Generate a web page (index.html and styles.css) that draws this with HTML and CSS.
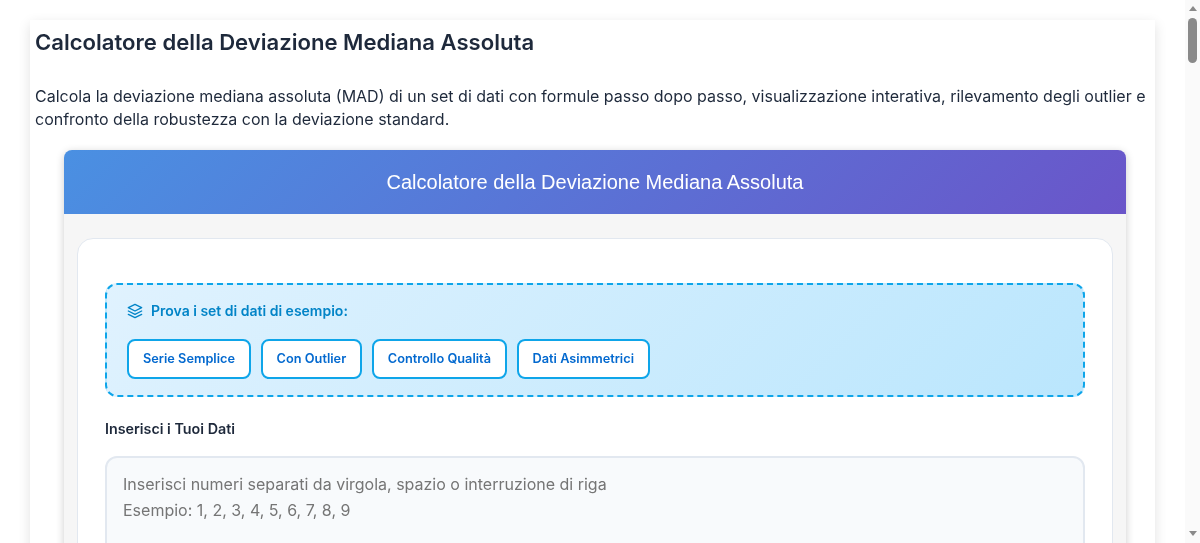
FILE: index.html
```html
<!DOCTYPE html>
<html lang="it">
<head>
<meta charset="utf-8">
<title>Calcolatore della Deviazione Mediana Assoluta</title>
<link rel="stylesheet" href="styles.css">
</head>
<body>
<main class="page">
  <h1 class="page-title">Calcolatore della Deviazione Mediana Assoluta</h1>
  <p class="page-intro">Calcola la deviazione mediana assoluta (MAD) di un set di dati con formule passo dopo passo, visualizzazione interativa, rilevamento degli outlier e confronto della robustezza con la deviazione standard.</p>
  <section class="widget">
    <header class="widget-head">Calcolatore della Deviazione Mediana Assoluta</header>
    <div class="widget-body">
      <div class="panel">
        <div class="samples">
          <div class="samples-title">
            <svg class="samples-icon" viewBox="0 0 24 24" fill="none" stroke="currentColor" stroke-width="2" stroke-linecap="round" stroke-linejoin="round"><path d="M12 2 2 7l10 5 10-5-10-5Z"/><path d="m2 12 10 5 10-5"/><path d="m2 17 10 5 10-5"/></svg>
            <span>Prova i set di dati di esempio:</span>
          </div>
          <div class="samples-buttons">
            <button class="sample-btn">Serie Semplice</button>
            <button class="sample-btn">Con Outlier</button>
            <button class="sample-btn">Controllo Qualità</button>
            <button class="sample-btn">Dati Asimmetrici</button>
          </div>
        </div>
        <label class="field-label" for="data">Inserisci i Tuoi Dati</label>
        <textarea class="field-input" id="data" placeholder="Inserisci numeri separati da virgola, spazio o interruzione di riga&#10;Esempio: 1, 2, 3, 4, 5, 6, 7, 8, 9"></textarea>
      </div>
    </div>
  </section>
</main>
<div class="scrollbar" aria-hidden="true">
  <span class="scrollbar-arrow scrollbar-arrow-up"></span>
  <span class="scrollbar-thumb"></span>
  <span class="scrollbar-arrow scrollbar-arrow-down"></span>
</div>
</body>
</html>
```
FILE: styles.css
```css
* { box-sizing: border-box; }
body {
  margin: 0 15px 0 0;
  background: #fff;
  color: #1e293b;
  font-family: Inter, "Liberation Sans", sans-serif;
}
.scrollbar {
  position: fixed;
  top: 0;
  right: 0;
  bottom: 0;
  width: 15px;
  display: flex;
  flex-direction: column;
  align-items: center;
  padding: 6px 0 7px;
  background: #fafafa;
}
.scrollbar-arrow {
  width: 0;
  height: 0;
  border-left: 4.5px solid transparent;
  border-right: 4.5px solid transparent;
}
.scrollbar-arrow-up { border-bottom: 5px solid #8a8a8a; }
.scrollbar-arrow-down { border-top: 5px solid #8a8a8a; margin-top: auto; }
.scrollbar-thumb {
  width: 9px;
  height: 45px;
  margin-top: 7px;
  border-radius: 4.5px;
  background: #8a8a8a;
}
.page {
  width: 1125px;
  margin: 20px auto 40px;
  padding: 5px 5px 40px;
  background: #fff;
  box-shadow: 0 4px 12px rgba(0, 0, 0, 0.12);
  will-change: transform;
}
.page-title {
  margin: 0;
  font-size: 22.1px;
  line-height: 34px;
  font-weight: 600;
}
.page-intro {
  margin: 26px 0 0;
  font-size: 16px;
  line-height: 23px;
  color: #1e293b;
}
.widget {
  width: 1062px;
  margin: 19px 0 0 29px;
  border-radius: 8px;
  background: #f6f6f6;
  box-shadow: 0 2px 8px rgba(0, 0, 0, 0.2);
}
.widget-head {
  height: 64px;
  display: flex;
  align-items: center;
  justify-content: center;
  border-radius: 8px 8px 0 0;
  background: linear-gradient(135deg, #4a90e2, #6a55c9);
  color: #fff;
  font-family: "Liberation Sans", Arial, sans-serif;
  font-size: 20px;
}
.widget-body { padding: 24px 13px 20px; }
.panel {
  padding: 44px 27px 30px;
  background: #fff;
  border: 1px solid #e2e8f0;
  border-radius: 16px;
}
.samples {
  padding: 15px 20px 16px;
  border: 2px dashed #0ea5e9;
  border-radius: 12px;
  background: linear-gradient(135deg, #e0f2fe, #bae6fd);
}
.samples-title {
  display: flex;
  align-items: center;
  gap: 8px;
  color: #0284c7;
  font-size: 14px;
  line-height: 22px;
  font-weight: 600;
}
.samples-icon { width: 16px; height: 16px; }
.samples-buttons {
  display: flex;
  gap: 9.6px;
  margin-top: 17px;
}
.sample-btn {
  height: 40px;
  padding: 0 14px 1px;
  border: 2px solid #0ea5e9;
  border-radius: 8px;
  background: #fff;
  color: #0369cf;
  font-family: Inter, "Liberation Sans", sans-serif;
  font-size: 12.75px;
  font-weight: 600;
}
.field-label {
  display: block;
  margin-top: 21px;
  font-size: 14.3px;
  line-height: 22px;
  font-weight: 600;
}
.field-input {
  display: block;
  width: 100%;
  height: 180px;
  margin-top: 16px;
  padding: 13px 16px;
  border: 2px solid #e2e8f0;
  border-radius: 12px;
  background: #f8fafc;
  color: #1e293b;
  font-family: Inter, "Liberation Sans", sans-serif;
  font-size: 16px;
  line-height: 26.4px;
  resize: none;
}
.field-input::placeholder { color: #757575; opacity: 1; }
```
